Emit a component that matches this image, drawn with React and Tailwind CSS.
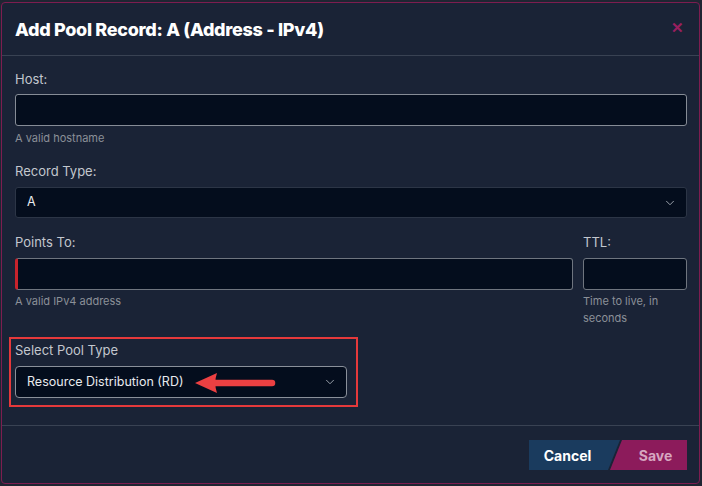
import { ChevronDown } from 'lucide-react'

function Label({ children }) {
  return <div className="text-[13px] leading-[18px] text-[#c3c7ce] mb-[7px]">{children}</div>
}

function Help({ children }) {
  return <div className="text-[11px] leading-[17px] text-[#8b9098] mt-[3px]">{children}</div>
}

function SelectBox({ value, border, className = '', children }) {
  return (
    <div className={`relative flex items-center justify-between bg-[#040d1d] border rounded-[3px] pl-[11px] pr-[9px] ${border} ${className}`}>
      <span className="text-[12.5px] text-[#e8eaee]">{value}</span>
      <ChevronDown size={14} strokeWidth={1.6} className="text-[#a3a9b3]" />
      {children}
    </div>
  )
}

export default function App() {
  return (
    <div className="h-[486px] overflow-hidden bg-[#1f2532] pt-[2px] pl-[1px] pr-[2px] font-['Inter',sans-serif]">
      <div className="h-[482px] bg-[#1a2336] border border-[#7d1d50] rounded-[4px] flex flex-col">
        {/* Header */}
        <div className="h-[53px] flex items-center justify-between pl-[13px] pr-[13px] border-b border-[#394253]">
          <h1 className="text-[18px] font-extrabold text-white tracking-[-0.3px]">Add Pool Record: A (Address - IPv4)</h1>
          <span className="text-[#9a1f5f] text-[15px] font-bold leading-none mr-[2px] -mt-[4px]">✕</span>
        </div>

        {/* Body */}
        <div className="pl-[13px] pr-[12px] pt-[14px] pb-[18px] border-b border-[#394253]">
          <div className="text-[13px] leading-[18px] text-[#c3c7ce] mb-[6px]">Host:</div>
          <div className="h-[32px] bg-[#040d1d] border border-[#868c96] rounded-[3px]" />
          <div className="text-[11px] leading-[14px] text-[#8b9098] mt-[5px]">A valid hostname</div>

          <div className="mt-[17px]">
            <Label>Record Type:</Label>
            <SelectBox value="A" border="border-[#2c3546]" className="h-[31px]" />
          </div>

          <div className="mt-[15px] grid grid-cols-[1fr_104px] gap-x-[10px]">
            <div>
              <Label>Points To:</Label>
              <div className="h-[32px] bg-[#040d1d] border border-[#6f757f] border-l-[3px] border-l-[#c8232c] rounded-[3px]" />
              <Help>A valid IPv4 address</Help>
            </div>
            <div>
              <Label>TTL:</Label>
              <div className="h-[32px] bg-[#040d1d] border border-[#6f757f] rounded-[3px]" />
              <Help>Time to live, in seconds</Help>
            </div>
          </div>

          {/* highlighted section */}
          <div className="mt-[10px] -ml-[6px] w-[349px] border-2 border-[#e5393b] pl-[4px] pr-[9px] pt-[2px] pb-[7px]">
            <Label>Select Pool Type</Label>
            <SelectBox value="Resource Distribution (RD)" border="border-[#8a909a]" className="h-[32px] rounded-[4px]">
              <svg className="absolute left-[179px] top-[5px]" width="82" height="22" viewBox="0 0 82 22">
                <line x1="18" y1="11" x2="77" y2="11" stroke="#ec4042" strokeWidth="6.5" strokeLinecap="round" />
                <path d="M0 11 L22 1 Q18.5 11 22 21 Z" fill="#ec4042" />
              </svg>
            </SelectBox>
          </div>
        </div>

        {/* Footer */}
        <div className="flex justify-end pt-[14px] pr-[12px]">
          <button className="h-[30px] w-[91px] -mr-[10px] bg-[#1a3b5e] text-white text-[14px] font-bold pr-[14px] [clip-path:polygon(0_0,100%_0,calc(100%-12px)_100%,0_100%)]">
            Cancel
          </button>
          <button className="h-[30px] w-[77px] bg-[#8c1b5b] text-[#d6a6c0] text-[14px] font-bold pl-[14px] [clip-path:polygon(12px_0,100%_0,100%_100%,0_100%)]">
            Save
          </button>
        </div>
      </div>
    </div>
  )
}
